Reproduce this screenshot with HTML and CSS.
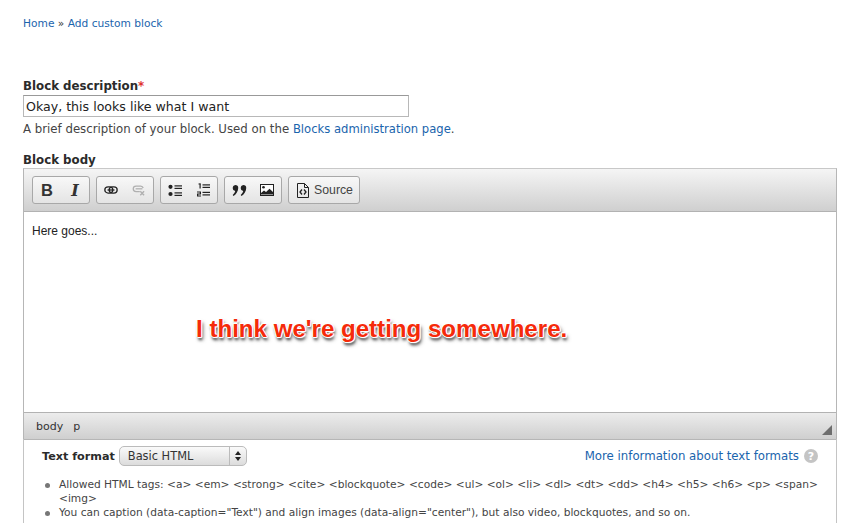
FILE: index.html
```html
<!DOCTYPE html>
<html lang="en">
<head>
<meta charset="utf-8">
<title>Add custom block</title>
<link rel="stylesheet" href="styles.css">
</head>
<body>
<main class="page">
  <nav class="crumbs"><a href="#">Home</a> » <a href="#">Add custom block</a></nav>

  <div class="field">
    <label class="label">Block description<span class="req">*</span></label>
    <input class="text-input" type="text" value="Okay, this looks like what I want">
    <p class="desc">A brief description of your block. Used on the <a class="desc-link" href="#">Blocks administration page</a>.</p>
  </div>

  <div class="field-body">
    <label class="label">Block body</label>
    <div class="editor">
      <div class="toolbar">
        <div class="group">
          <span class="tool glyph-b">B</span>
          <span class="tool glyph-i">I</span>
        </div>
        <div class="group">
          <span class="tool">
            <svg width="14" height="8" viewBox="0 0 16 10" fill="none" stroke="#222" stroke-width="1.6" preserveAspectRatio="none"><rect x="1" y="1.2" width="9" height="7.6" rx="3.8"/><rect x="6" y="1.2" width="9" height="7.6" rx="3.8"/><path d="M4 5h8"/></svg>
          </span>
          <span class="tool">
            <svg width="14" height="11" viewBox="0 0 16 13" fill="none" stroke="#b0b0b0" stroke-width="1.5"><path d="M9 7.800H4.500a3.300 3.300 0 0 1 0-6.600H10a3.300 3.300 0 0 1 3 2.300"/><path d="M4 4.500h8"/><path d="M9.500 7.500l4.500 4.500M14 7.500l-4.500 4.500" stroke-width="1.700"/></svg>
          </span>
        </div>
        <div class="group">
          <span class="tool">
            <svg width="14" height="13" viewBox="0 0 14 13" fill="#222"><circle cx="2.500" cy="2.800" r="2.100"/><circle cx="2.500" cy="10" r="2.100"/><rect x="6.500" y="1.300" width="7.500" height="1.200"/><rect x="6.500" y="3.800" width="7.500" height="1.200"/><rect x="6.500" y="8.300" width="7.500" height="1.200"/><rect x="6.500" y="10.800" width="7.500" height="1.200"/></svg>
          </span>
          <span class="tool">
            <svg width="13" height="14" viewBox="0 0 13 14" fill="#222"><rect x="1.500" y="0.500" width="2" height="1"/><rect x="2.500" y="0.500" width="1.200" height="5"/><path d="M0 8.500h4v3H1.200v1H4v1H0v-3h2.800v-1H0z"/><rect x="5.500" y="1.300" width="7.500" height="1.200"/><rect x="5.500" y="3.800" width="7.500" height="1.200"/><rect x="5.500" y="8.800" width="7.500" height="1.200"/><rect x="5.500" y="11.300" width="7.500" height="1.200"/></svg>
          </span>
        </div>
        <div class="group">
          <span class="tool">
            <svg width="15" height="11" viewBox="0 0 15 11" fill="#222"><path d="M3.200 0a3 3 0 0 1 3 3.200c0 3.200-2.300 6.300-4.700 7.800l-.8-1c1.300-1 2.300-2.600 2.500-3.900A3.100 3.100 0 0 1 3.200 0z"/><path d="M11.200 0a3 3 0 0 1 3 3.200c0 3.200-2.300 6.300-4.700 7.800l-.8-1c1.300-1 2.300-2.600 2.500-3.900A3.100 3.100 0 0 1 11.200 0z"/></svg>
          </span>
          <span class="tool">
            <svg width="14" height="12" viewBox="0 0 14 12"><rect x="0.500" y="0.500" width="13" height="11" fill="#fff" stroke="#222"/><circle cx="3.500" cy="3.300" r="1.300" fill="#222"/><path d="M1 10.500V9l3-2.500L6 8l3.500-3.300L13 8v2.500z" fill="#222"/></svg>
          </span>
        </div>
        <div class="group group-source">
          <svg width="12" height="15" viewBox="0 0 12 15" fill="none" stroke="#222"><path d="M.5.500h7l4 4v10H.5z"/><path d="M7.500.500v4h4"/><path d="M5 6.500L3 9l2 2.500M7 6.500L9 9l-2 2.500" stroke-width="1.300"/></svg>
          <span class="source-text">Source</span>
        </div>
      </div>
      <div class="content">Here goes...</div>
      <div class="statusbar">
        <span class="path">body</span><span class="path">p</span>
        <span class="resize"></span>
      </div>
    </div>
    <div class="filter">
      <div class="filter-head">
        <div class="format">
          <span class="format-label">Text format</span>
          <span class="select"><span class="select-value">Basic HTML</span><span class="select-arrows"><span class="arrow-up"></span><span class="arrow-down"></span></span></span>
        </div>
        <div class="more">
          <a href="#">More information about text formats</a>
          <span class="help">?</span>
        </div>
      </div>
      <ul class="tips">
        <li>Allowed HTML tags: &lt;a&gt; &lt;em&gt; &lt;strong&gt; &lt;cite&gt; &lt;blockquote&gt; &lt;code&gt; &lt;ul&gt; &lt;ol&gt; &lt;li&gt; &lt;dl&gt; &lt;dt&gt; &lt;dd&gt; &lt;h4&gt; &lt;h5&gt; &lt;h6&gt; &lt;p&gt; &lt;span&gt; &lt;img&gt;</li>
        <li>You can caption (data-caption="Text") and align images (data-align="center"), but also video, blockquotes, and so on.</li>
      </ul>
    </div>
  </div>
</main>
<div class="note">I think we're getting somewhere.</div>
</body>
</html>
```
FILE: styles.css
```css
* { box-sizing: border-box; }
html, body { margin: 0; padding: 0; height: 523px; overflow: hidden; background: #fff; }
body { font-family: "DejaVu Sans", sans-serif; font-size: 11px; color: #333; position: relative; }
a { color: #1a64ad; text-decoration: none; }
.page { padding: 17px 20px 0 23px; }
.crumbs { height: 14px; line-height: 14px; font-size: 10.650px; color: #333; }
.field { margin-top: 48px; }
.label { display: block; font-weight: bold; font-size: 11.800px; line-height: 15px; color: #2b2b2b; }
.req { color: #e0322f; }
.text-input { display: block; width: 386px; height: 22px; margin: 1px 0 0; padding: 0 2px; border: 1px solid #b8b8b8; border-top-color: #999; border-radius: 0; font: 12.600px "DejaVu Sans", sans-serif; color: #222; background: #fff; }
.desc { margin: 5px 0 0; line-height: 14px; font-size: 11.750px; color: #444; }
.desc-link { font-size: 11.600px; }
.field-body { margin-top: 17px; }
.editor { width: 814px; border: 1px solid #b6b6b6; border-top-color: #c8c8c8; }
.toolbar { display: flex; gap: 6px; height: 43px; padding: 7px 8px 0; background: linear-gradient(#f5f5f5, #cfcfcf); border-bottom: 1px solid #b2b2b2; }
.group { display: flex; height: 28px; border: 1px solid #a8a8a8; border-radius: 3px; background: linear-gradient(#f8f8f8, #e4e4e4); }
.group-source { align-items: center; gap: 5px; padding: 0 6px 0 8px; }
.tool { display: flex; align-items: center; justify-content: center; width: 28px; height: 26px; color: #222; }
.glyph-b { font: bold 16.500px "Liberation Sans", sans-serif; color: #333; }
.glyph-i { font: italic bold 16px "DejaVu Serif", serif; color: #333; }
.source-text { font: 12.300px "Liberation Sans", sans-serif; color: #444; }
.content { height: 200px; padding: 11px 8px; font: 12px/16px "Liberation Sans", sans-serif; color: #222; background: #fff; }
.statusbar { display: flex; align-items: center; gap: 10px; height: 27px; padding: 0 12px; position: relative; font-size: 11px; font-weight: 500; color: #333; background: linear-gradient(#ececec, #cfcfcf); border-top: 1px solid #b2b2b2; }
.resize { position: absolute; right: 4px; bottom: 4px; width: 0; height: 0; border-style: solid; border-width: 0 0 10px 10px; border-color: transparent transparent #6e6e6e transparent; }
.filter { width: 814px; height: 100px; padding: 0 18px; border: solid #c4c4c4; border-width: 0 1px; margin-top: -1px; }
.filter-head { display: flex; justify-content: space-between; align-items: center; height: 32px; padding-top: 2px; }
.format { display: flex; align-items: center; gap: 4px; }
.format-label { font-weight: bold; font-size: 11.200px; color: #2b2b2b; }
.select { display: flex; align-items: center; width: 128px; height: 20px; border: 1px solid #bbb; border-radius: 5px; background: linear-gradient(#fafafa, #dcdcdc); }
.select-value { flex: 1; padding-left: 8px; font-size: 11.400px; color: #333; }
.select-arrows { display: flex; flex-direction: column; align-items: center; justify-content: center; gap: 2px; width: 17px; height: 18px; border-left: 1px solid #bbb; }
.arrow-up { border: solid transparent; border-width: 0 3px 4px; border-bottom-color: #222; }
.arrow-down { border: solid transparent; border-width: 4px 3px 0; border-top-color: #222; }
.more { display: flex; align-items: center; gap: 5px; font-size: 11.750px; }
.help { display: flex; align-items: center; justify-content: center; width: 14px; height: 14px; border-radius: 50%; background: #c4c4c4; color: #fff; font-weight: bold; font-size: 11px; }
.tips { margin: 7px 0 0; padding: 0 0 0 17px; font-size: 10.650px; line-height: 14px; color: #444; list-style: none; }
.tips li { position: relative; }
.tips li::before { content: ""; position: absolute; left: -14px; top: 5px; width: 5px; height: 5px; border-radius: 50%; background: #777; }
.note { position: absolute; left: 196px; top: 315px; font: bold 24.100px/28px "Liberation Sans", sans-serif; color: #f52a0a; white-space: nowrap; text-shadow: 1px 0 0 #fff, -1px 0 0 #fff, 0 1px 0 #fff, 0 -1px 0 #fff, 1px 1px 1px #fff, -1px -1px 1px #fff, 1px 3px 3px rgba(0,0,0,.7), 2px 3px 4px rgba(0,0,0,.35); }
```
